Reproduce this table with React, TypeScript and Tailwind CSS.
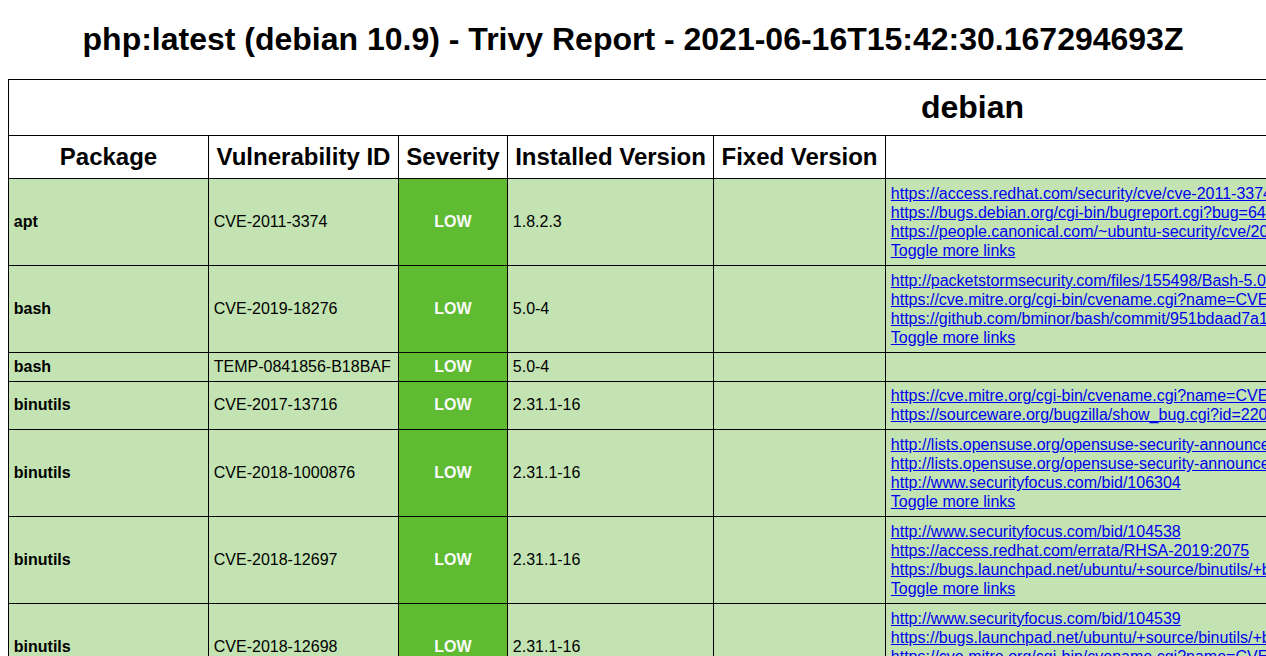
import React from "react";

type Row = {
  pkg: string;
  id: string;
  inst: string;
  links: string[];
  toggle: boolean;
};

const rows: Row[] = [
  {
    pkg: "apt",
    id: "CVE-2011-3374",
    inst: "1.8.2.3",
    links: [
      "https://access.redhat.com/security/cve/cve-2011-3374",
      "https://bugs.debian.org/cgi-bin/bugreport.cgi?bug=642480",
      "https://people.canonical.com/~ubuntu-security/cve/2011/CVE-2011-3374.html",
    ],
    toggle: true,
  },
  {
    pkg: "bash",
    id: "CVE-2019-18276",
    inst: "5.0-4",
    links: [
      "http://packetstormsecurity.com/files/155498/Bash-5.0-Patch-11-Privilege-Escalation.html",
      "https://cve.mitre.org/cgi-bin/cvename.cgi?name=CVE-2019-18276",
      "https://github.com/bminor/bash/commit/951bdaad7a18cc0dc1036bba86b18b90874d39ff",
    ],
    toggle: true,
  },
  {
    pkg: "bash",
    id: "TEMP-0841856-B18BAF",
    inst: "5.0-4",
    links: [],
    toggle: false,
  },
  {
    pkg: "binutils",
    id: "CVE-2017-13716",
    inst: "2.31.1-16",
    links: [
      "https://cve.mitre.org/cgi-bin/cvename.cgi?name=CVE-2017-13716",
      "https://sourceware.org/bugzilla/show_bug.cgi?id=22009",
    ],
    toggle: false,
  },
  {
    pkg: "binutils",
    id: "CVE-2018-1000876",
    inst: "2.31.1-16",
    links: [
      "http://lists.opensuse.org/opensuse-security-announce/2019-10/msg00072.html",
      "http://lists.opensuse.org/opensuse-security-announce/2019-11/msg00008.html",
      "http://www.securityfocus.com/bid/106304",
    ],
    toggle: true,
  },
  {
    pkg: "binutils",
    id: "CVE-2018-12697",
    inst: "2.31.1-16",
    links: [
      "http://www.securityfocus.com/bid/104538",
      "https://access.redhat.com/errata/RHSA-2019:2075",
      "https://bugs.launchpad.net/ubuntu/+source/binutils/+bug/1763099",
    ],
    toggle: true,
  },
  {
    pkg: "binutils",
    id: "CVE-2018-12698",
    inst: "2.31.1-16",
    links: [
      "http://www.securityfocus.com/bid/104539",
      "https://bugs.launchpad.net/ubuntu/+source/binutils/+bug/1763102",
      "https://cve.mitre.org/cgi-bin/cvename.cgi?name=CVE-2018-12698",
    ],
    toggle: true,
  },
];

const cell = "border border-black p-[4.8px] whitespace-nowrap";
const thSub =
  "border border-black px-[7.2px] py-[7px] whitespace-nowrap text-[24px] font-bold text-center";

export default function App() {
  return (
    <div className="px-2 font-['Liberation_Sans',Arial,Helvetica,sans-serif] leading-[normal] text-black bg-white min-h-screen">
      <h1 className="text-[32px] font-bold text-center leading-[normal] mt-[21.44px] mb-[21px] whitespace-nowrap">
        php:latest (debian 10.9) - Trivy Report - 2021-06-16T15:42:30.167294693Z
      </h1>
      <table className="table-fixed border-collapse w-[1928px] text-[16px]">
        <colgroup>
          <col className="w-[200px]" />
          <col className="w-[190px]" />
          <col className="w-[109px]" />
          <col className="w-[206px]" />
          <col className="w-[172px]" />
          <col className="w-[1051px]" />
        </colgroup>
        <thead>
          <tr>
            <th
              colSpan={6}
              className="border border-black p-[9px] text-[32px] font-bold text-center whitespace-nowrap"
            >
              debian
            </th>
          </tr>
          <tr>
            <th className={thSub}>Package</th>
            <th className={thSub}>Vulnerability ID</th>
            <th className={thSub}>Severity</th>
            <th className={thSub}>Installed Version</th>
            <th className={thSub}>Fixed Version</th>
            <th className={thSub}>Links</th>
          </tr>
        </thead>
        <tbody>
          {rows.map((r, i) => (
            <tr key={i} className="bg-[#c3e4b2]">
              <td className={`${cell} font-bold`}>{r.pkg}</td>
              <td className={cell}>{r.id}</td>
              <td
                className={`${cell} bg-[#5fbb31] text-center font-bold text-[#fafafa]`}
              >
                LOW
              </td>
              <td className={cell}>{r.inst}</td>
              <td className={cell}></td>
              <td className={`${cell} leading-[19.05px] overflow-visible`}>
                {r.links.map((l, j) => (
                  <a
                    key={j}
                    href="#"
                    className="block text-[#0000ee] underline"
                  >
                    {l}
                  </a>
                ))}
                {r.toggle && (
                  <a href="#" className="block text-[#0000ee] underline">
                    Toggle more links
                  </a>
                )}
              </td>
            </tr>
          ))}
        </tbody>
      </table>
    </div>
  );
}
